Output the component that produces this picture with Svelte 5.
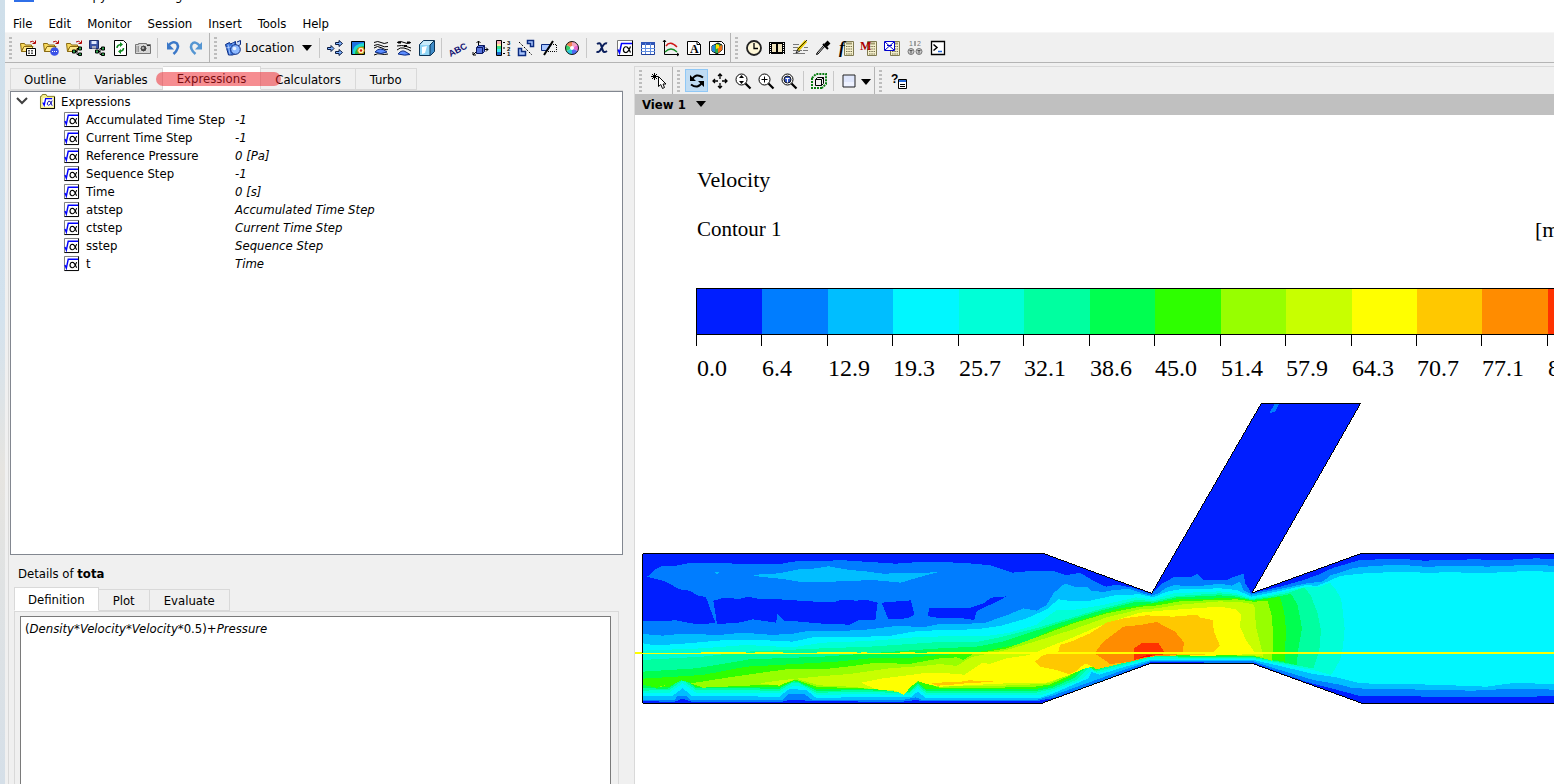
<script>
    // toolbar icons, drawn on a 16x16 grid
    const folder = `<path d="M.5 3.500h4l1 1.500h6v2H4L1.500 11.500z" fill="#f8d95c" stroke="#8a6a10"/><path d="M4 6.500h9l-2.500 5h-9z" fill="#ffe88a" stroke="#8a6a10"/><path d="M10 2q3-2 5 1M15.500.5v3h-3" fill="none" stroke="#b00000"/>`;
    const tree = `<path d="M8 11.500h3M11 8.500v6M11 8.500h2M11 14.500h2" stroke="#000" fill="none"/><path d="M6.500 10h3v3h-3zM12.500 7h3v3h-3zM12.500 13h3v2.500h-3z" fill="#2fa84f" stroke="#000"/>`;
    const root = `<path d="M1 9.500l1.500 3.500L4.500 3.500H15" fill="none" stroke="#00f" stroke-width="1.500"/><path d="M13.500 6.500Q11 13 8.500 12.500Q6 12 6.500 9Q7.500 6 10 7Q11.500 8 13.500 12.500" fill="none" stroke="#000" stroke-width="1.200"/>`;
    const sheet = `<path d="M6.500 1.500h9v14h-9z" fill="#f4efcb" stroke="#807a50"/><path d="M8 3.500h6" stroke="#a09a70" stroke-width="2"/><path d="M8 6.500h6M8 9h6M8 11.500h6M8 14h6" stroke="#76714f" stroke-dasharray="1.500 .8"/>`;
    const lens = `<circle cx="6.500" cy="6.500" r="5.500" fill="#fff" stroke="#000"/><path d="M10.500 10.500l5 5" stroke="#000" stroke-width="2.200"/>`;

    const icons = {
        openState: folder + `<path d="M6.500 8.500h9v7h-9z" fill="#fff" stroke="#000"/><path d="M8 10.500h6M8 12h6M8 13.500h5" stroke="#555" stroke-dasharray="2 1"/>`,
        openResults: folder + `<circle cx="11.500" cy="11.500" r="4.300" fill="#3a52e8"/><path d="M9 11.500h6" stroke="#fff" stroke-dasharray="1 1"/>`,
        openCase: folder + tree,
        saveState: `<path d="M.5.500h9v8h-9z" fill="#3b55a8" stroke="#1c2d6b"/><path d="M2.500 1h5v3h-5z" fill="#dfe8ff"/><path d="M3 6h4v2.500H3z" fill="#aab"/>` + tree,
        refresh: `<path d="M2.500.5h9l3 3v12h-12z" fill="#fff" stroke="#000"/><path d="M5 8q0-3 4-3.500M11.500 8q0 3-4 3.500" fill="none" stroke="#118a22" stroke-width="1.500"/><path d="M8 2l3 2.500L8 7zM9 9v5l-3-2.500z" fill="#118a22"/>`,
        camera: `<path d="M.5 4.500h3v-1h8v1h4v9H.5z" fill="#d5d5d5" stroke="#777"/><path d="M2 6v6M3.500 6v6" stroke="#999"/><circle cx="8.500" cy="8.500" r="3.500" fill="#444" stroke="#eee"/><circle cx="8" cy="8" r="1.300" fill="#aaa"/><path d="M12 5.500h3" stroke="#333"/>`,
        undo: `<path d="M3 6Q8 0 12 3.500Q15 8 8.500 14" fill="none" stroke="#3b78c8" stroke-width="2.500"/><path d="M2 2v7.500h7z" fill="#3b78c8"/>`,
        redo: `<path d="M12 6Q7 0 3.500 4.500Q1.500 9 7.500 14" fill="none" stroke="#5596d2" stroke-width="2.500"/><path d="M14 2v7.500H7z" fill="#5596d2"/>`,
        location: `<path d="M.5 4.500l4-2 1 1.500 5-2.500 1 12-4 1.500H3.500z" fill="#3c78e0" stroke="#0a2a80"/><path d="M3 4.500l2 10M8 2.500l1 12M1 8l9-2" stroke="#bcd4ff" stroke-width=".8"/><path d="M12 2l3.500-1.500v4L13 6" fill="#bcd4ff" stroke="#0a2a80"/><circle cx="10.500" cy="9.500" r="4.800" fill="#8db9ff" stroke="#0a2a80"/><circle cx="9.500" cy="8.500" r="1.800" fill="#e8f2ff"/>`,
        vector: `<g fill="#7fb2ff" stroke="#0a1a40"><path d="M.5 7.500h3.500v-2l3 3-3 3v-2H.5z"/><path d="M8.500 2.500H12v-2l3.500 3-3.500 3v-2H8.500z"/><path d="M8.500 11.500H12v-2l3.500 3-3.500 3v-2H8.500z"/></g>`,
        contour: `<path d="M1.500 1.500h13v13h-13z" fill="#1d72e0" stroke="#000"/><path d="M3 14V10q1-6 11-7v11z" fill="#20d8d0"/><path d="M5 14q0-7 9-8v8z" fill="#25b33c"/><circle cx="11" cy="10.500" r="3.300" fill="#fff7c0" stroke="#d08a00"/><circle cx="11" cy="10.500" r="1.200" fill="#d01010"/>`,
        streamline: `<path d="M1 2.500q4-2 7 0t7 0M1 5.500q4-2 7 0t7 1M1 8q3-3 8 0t6 1M1 15q4-2 7-1t7 0" fill="none" stroke="#000"/><path d="M2 12q5-6 12 0-6 3-12 0z" fill="#5b8cff" stroke="#0a2a80"/>`,
        particle: `<path d="M1 2.500q4-2 7 0t7 0M1 6q5-1 8 0t6 2M1 10q3-3 7-2t7 3" fill="none" stroke="#000"/><path d="M2 1.500h3v2H2zM11 1.500h3v2h-3zM8 5h3v2H8z"/><path d="M2 14q4-5 8-2l4 2.500q-5 1.500-12-.5z" fill="#5b8cff" stroke="#0a2a80"/>`,
        volume: `<path d="M.5 4.500l4-4h11v11l-4 4H.5z" fill="#3e8cc8" stroke="#0b3355"/><path d="M1 5h10v10H1z" fill="#8fd4f4"/><path d="M4.500 1h10.500l-4 4H1z" fill="#c9ecfa"/><path d="M3 7l5-1-2 7-3 1z" fill="#fff"/><path d="M11 5l4-4M11 5v10" stroke="#0b3355"/>`,
        label: `<text x="-2" y="13" transform="rotate(-28 8 8)" font-family="Liberation Sans" font-weight="bold" font-size="9" fill="#101070">ABC</text>`,
        frame: `<path d="M6.500 9V1M4.500 3l2-2 2 2M10 9.500h6M14 7.500l2 2-2 2M5 11l-4 4M1 12v3h3" fill="none" stroke="#000"/><path d="M4.500 7.500l2-2h6v6l-2 2h-6z" fill="#5673dc" stroke="#0b1860"/><path d="M4.500 7.500h6v6M10.500 7.500l2-2" fill="none" stroke="#0b1860"/>`,
        legend: `<path d="M1.500.5h5v15h-5z" fill="#f9b0b8" stroke="#000"/><path d="M2 4h4v3H2z" fill="#f8f09a"/><path d="M2 6h4v4H2z" fill="#3fe08b"/><path d="M2 9h4v3H2z" fill="#3ee8f4"/><path d="M2 12h4v3H2z" fill="#26c"/><path d="M8 2.500h2M8 8h2M8 13.500h2" stroke="#000"/><g font-family="Liberation Sans" font-size="6" font-weight="bold"><text x="12" y="5">3</text><text x="12" y="10.500">2</text><text x="12" y="16">1</text></g>`,
        instance: `<path d="M9.500.5h6v6h-3v-3h-3zM.5 8.500h3v3h4v4h-7z" fill="#a9c6ff" stroke="#0a2a80" stroke-width="1.500"/><path d="M1 2l13 13" stroke="#000" stroke-dasharray="2 1.500"/>`,
        clip: `<path d="M.5 4.500h10l-4 6h-6z" fill="#a9c6ff" stroke="#0a2a80"/><path d="M10 4.500h5.500v7H6" fill="none" stroke="#000" stroke-dasharray="1 1"/><path d="M12 1L3 15" stroke="#000" stroke-width="2"/>`,
        palette: `<circle cx="8" cy="8" r="6.500" fill="#fff"/><path d="M8 8V1.500a6.500 6.500 0 0 1 5.600 3.200z" fill="#f5a3c0"/><path d="M8 8l5.600-3.300a6.500 6.500 0 0 1 0 6.600z" fill="#e86bd0"/><path d="M8 8l5.600 3.300A6.500 6.500 0 0 1 8 14.500z" fill="#4d68f0"/><path d="M8 8v6.500a6.500 6.500 0 0 1-5.600-3.200z" fill="#28c8d8"/><path d="M8 8l-5.600 3.300a6.500 6.500 0 0 1 0-6.600z" fill="#35cf6a"/><path d="M8 8L2.400 4.700A6.500 6.500 0 0 1 8 1.500z" fill="#f08050"/><circle cx="8" cy="8" r="2" fill="#fff"/><circle cx="8" cy="8" r="6.500" fill="none" stroke="#111"/>`,
        variable: `<path d="M3 4q3-2 4 1l2 6q1 2 4 0M13 3.500q-2-1-4 2L6.500 10q-2 3-4 1.500" fill="none" stroke="#0b1f5c" stroke-width="2"/>`,
        expression: `<path d="M.5.500h15v15H.5z" fill="#fff" stroke="#777"/><path d="M15.500.5v15H.5" fill="none" stroke="#000"/>` + root,
        table: `<path d="M1.500 2.500h13v12h-13z" fill="#fff" stroke="#1d3f9a"/><path d="M1 2h14v3H1z" fill="#2f55b8"/><path d="M1 8.500h14M1 11.500h14M5.500 3v11M10.500 3v11" stroke="#5f8ce0"/>`,
        chart: `<path d="M1.500 0v14.500H16M0 2l1.500-2L3 2M14 13l2 1.500-2 1.500" fill="none" stroke="#000"/><path d="M3 6q4-6 11 1" fill="none" stroke="#d01818" stroke-width="1.500"/><path d="M2 12q6-6 12 0" fill="none" stroke="#118a22" stroke-width="1.200"/>`,
        comment: `<path d="M1.500 1.500h10l3 3v10h-13z" fill="#fff" stroke="#000"/><path d="M11 1.500v3h3.500" fill="none" stroke="#000"/><text x="4" y="12.500" font-family="Liberation Serif" font-weight="bold" font-size="12">A</text>`,
        figure: `<path d="M.5 1.500h12l3 3v10H.5z" fill="#fff" stroke="#000"/><path d="M3 6l6-3 4 2v5l-5 4-5-3z" fill="#2ba84a" stroke="#000"/><path d="M3 6l3-1.500v8L3 11z" fill="#28d"/><path d="M9 7l4-2v5l-4 3z" fill="#f07018"/><path d="M7 4l3 1v3L7 9z" fill="#ffe400"/>`,
        clock: `<circle cx="8" cy="8" r="7" fill="#fff8d8" stroke="#222" stroke-width="1.800"/><path d="M8 3v5.500h4" fill="none" stroke="#000" stroke-width="1.300"/>`,
        film: `<path d="M0 2h16v12H0z"/><path d="M3 4h4v8H3zM9 4h4v8H9z" fill="#efe3bd"/><path d="M1.500 3v11M14.500 3v11" stroke="#fff" stroke-dasharray="1 1"/>`,
        report: `<path d="M1 4.500h6M1 7.500h5M1 10.500h9M1 13.500h12M12 7.500h4M11 10.500h5" stroke="#777"/><path d="M14 1L6 10" stroke="#e8c800" stroke-width="3"/><path d="M15 0L6 9l-2 4 4-2" fill="none" stroke="#000" stroke-width=".8"/>`,
        probe: `<path d="M10 6l-7 8-1.500.500.5-1.500L9 5" fill="#eaeaea" stroke="#000"/><path d="M8 4l5 5" stroke="#000" stroke-width="2"/><path d="M10.500 5.500L14 2" stroke="#000" stroke-width="4"/>`,
        functionCalc: sheet + `<text x="1" y="12.500" font-family="Liberation Serif" font-size="17" font-style="italic" font-weight="bold">f</text>`,
        macroCalc: sheet + `<text x="-1" y="10" font-family="Liberation Serif" font-size="12" font-weight="bold" fill="#a00">M</text>`,
        meshCalc: sheet + `<path d="M.5 1.500h10v9H.5z" fill="#fff" stroke="#00c"/><path d="M1 2l9 8M10 2l-9 8M3 5.500h5" stroke="#00c"/>`,
        compare: `<g font-family="Liberation Sans" font-size="7" fill="#777"><text x="2" y="6">1</text><text x="10" y="6">2</text></g><circle cx="4" cy="11.500" r="3" fill="#ccc" stroke="#777"/><circle cx="12" cy="11.500" r="3" fill="#ccc" stroke="#777"/><path d="M2.500 10.500h3M4 10.500v3M10.500 10.500h3M12 10.500v3M8 1v5" stroke="#555"/>`,
        console: `<path d="M1.500 1.500h13v13h-13z" fill="#fff" stroke="#000" stroke-width="1.300"/><path d="M3.500 4.500L7 7.500l-3.500 3" fill="none" stroke="#000" stroke-width="1.500"/><path d="M8 11.500h4" stroke="#2468d8" stroke-width="1.500"/>`,
        pick: `<path d="M3.500 0v7M0 3.500h7M1 1l5 5M6 1L1 6" stroke="#000"/><path d="M7.500 3.500v10l2.300-2 1.700 4 2-1-1.500-3.500h3z" fill="#fff" stroke="#000"/>`,
        rotate: `<path d="M3 6.500Q7-.500 14 4.500M13 9.500Q9 16.500 2 11.500" fill="none" stroke="#000" stroke-width="2"/><path d="M1 2v6h6zM15 14V8H9z"/>`,
        pan: `<path d="M8 1v5M8 10v5M1 8h5M10 8h5M6 3l2-2 2 2M6 13l2 2 2-2M3 6L1 8l2 2M13 6l2 2-2 2" fill="none" stroke="#000" stroke-width="1.300"/>`,
        zoom: lens + `<path d="M6.500 2l2.500 3H4zM6.500 11L9 8H4z"/>`,
        zoomBox: lens + `<path d="M6.500 3.500v6M3.500 6.500h6" stroke="#000"/>`,
        fit: lens + `<circle cx="6.500" cy="6.500" r="3.500" fill="#3556c4" stroke="#111"/><path d="M4.500 5.500h4M6.500 5.500v4" stroke="#fff"/>`,
        highlight: `<path d="M1 5V15h10M1 5l4-4h10v10l-4 4" fill="none" stroke="#0a7d12" stroke-width="2" stroke-dasharray="2 1"/><path d="M4.500 6.500l2-2h6v6l-2 2h-6zM4.500 6.500h6v6M10.500 6.500l2-2" fill="none" stroke="#000"/>`,
        viewport: `<path d="M2 2h12v12H2z" fill="#dfe6fb" stroke="#222"/><path d="M3 9h10v4H3z" fill="#eef2ff"/>`,
        help: `<text x="0" y="10" font-family="Liberation Sans" font-weight="bold" font-size="12">?</text><path d="M7.500 6.500h8v9h-8z" fill="#fff" stroke="#000"/><path d="M8 8h7" stroke="#2468d8" stroke-width="2"/><path d="M9 11.500h5M9 13.500h5" stroke="#000"/>`,
        folderRoot: `<path d="M.5 2.500h1l1-2h4l1 2h8v13H.5z" fill="#f7ef8e" stroke="#7a7420"/><path d="M3 4.500h11v9H3z" fill="#fff"/><path d="M3 9l1.500 3L6 5h7" fill="none" stroke="#00f" stroke-width="1.400"/><path d="M13 7Q11 12.500 9 12T8 9.500q1-3 3-1.500l2 4.500" fill="none" stroke="#00a"/><path d="M15.500 3v12.500H1" fill="none" stroke="#000"/>`
    };

    const menus = ["File", "Edit", "Monitor", "Session", "Insert", "Tools", "Help"];
    const fileTools = ["openState", "openResults", "openCase", "saveState", "refresh", "camera"];
    const historyTools = ["undo", "redo"];
    const insertTools = [
        ["vector", "contour", "streamline", "particle", "volume"],
        ["label", "frame", "legend", "instance", "clip", "palette"],
        ["variable", "expression", "table", "chart", "comment", "figure"]
    ];
    const calcTools = ["clock", "film", "report", "probe", "functionCalc", "macroCalc", "meshCalc", "compare", "console"];
    const viewTools = ["rotate", "pan", "zoom", "zoomBox", "fit"];

    const tabs = ["Outline", "Variables", "Expressions", "Calculators", "Turbo"];
    const detailTabs = ["Definition", "Plot", "Evaluate"];
    let activeTab = "Expressions";
    let activeDetail = "Definition";
    let activeTool = "rotate";
    let expanded = true;

    const expressions = [
        ["Accumulated Time Step", "-1"],
        ["Current Time Step", "-1"],
        ["Reference Pressure", "0 [Pa]"],
        ["Sequence Step", "-1"],
        ["Time", "0 [s]"],
        ["atstep", "Accumulated Time Step"],
        ["ctstep", "Current Time Step"],
        ["sstep", "Sequence Step"],
        ["t", "Time"]
    ];

    const colors = ["#001eff", "#007dff", "#00beff", "#00f7ff", "#00ffd7", "#00ffa0", "#00ff50", "#2eff00", "#97ff00", "#c8ff00", "#ffff00", "#ffc800", "#ff8c00", "#ff3200", "#ff0000"];
    const levels = ["0.0", "6.4", "12.9", "19.3", "25.7", "32.1", "38.6", "45.0", "51.4", "57.9", "64.3", "70.7", "77.1", "83.6"];
    const bandX = i => Math.round(62 + i * 65.45);

    // duct outline and contour bands, three units to the pixel
    const duct = "20,41 1224,41 1547,160 1876,-410 2174,-410 1848,159 2174,41 2760,41 2760,490 2178,490 1848,370 1544,370 1217,490 20,490";
    const bands = [
        [1, "34,110 55,90 75,79 115,78 160,69 275,69 310,73 435,72 470,65 500,63 625,61 700,66 780,71 850,66 980,68 1062,76 1130,98 1195,92 1255,94 1290,106 1332,98 1375,124 1410,140 1440,134 1485,142 1515,152 1547,162 1552,155 1577,132 1612,112 1662,112 1685,102 1704,120 1772,120 1800,108 1822,101 1828,130 1847,160 1862,156 1932,140 2002,120 2050,103 2090,84 2172,60 2292,56 2362,62 2512,58 2602,60 2702,55 2760,58 2760,468 2612,472 2412,470 2172,468 2112,452 2012,426 1932,398 1852,368 1544,367 1472,394 1362,436 1252,474 1200,484 860,484 840,480 800,485 520,484 500,480 460,480 440,485 165,485 140,476 115,485 20,484 20,244 80,243 120,241 165,250 200,253 238,248 210,172 185,166 160,152 130,148 90,125"],
        [0, "232,182 265,173 310,177 335,170 365,176 430,178 520,184 590,187 620,179 660,182 690,179 725,188 718,240 670,240 640,254 560,251 480,244 445,243 423,222 421,248 385,243 350,238 300,250 243,251"],
        [0, "737,188 825,181 835,225 812,235 757,238"],
        [0, "880,205 997,205 1042,190 1067,173 1112,169 1082,185 1022,213 1015,240 982,235 912,235 875,228"],
        [2, "345,105 430,100 490,88 530,86 578,79 640,90 690,94 740,101 860,98 905,97 865,107 795,128 710,120 620,124 500,127 440,117 370,110"],
        [2, "235,96 261,99 240,101"],
        [1, "1917,-410 1930,-410 1917,-385 1900,-380"],
        [2, "20,282 80,287 140,281 250,285 320,278 400,284 460,283 520,272 620,273 700,268 790,257 860,262 912,252 1042,250 1112,226 1162,205 1202,212 1232,195 1252,160 1287,130 1322,142 1352,140 1367,152 1402,156 1432,150 1482,147 1512,158 1548,167 1572,158 1587,145 1612,136 1692,138 1752,131 1787,137 1812,124 1822,150 1847,164 1932,147 2012,130 2062,124 2082,107 2152,84 2212,78 2292,74 2362,80 2512,78 2552,80 2692,74 2760,78 2760,449 2632,446 2512,452 2312,448 2152,445 2112,434 2032,420 1932,390 1852,364 1544,364 1462,390 1357,428 1252,466 1200,480 860,480 840,472 800,480 530,480 505,463 455,463 440,480 165,480 150,468 125,468 115,480 20,480"],
        [3, "20,310 60,316 130,312 270,300 350,299 470,305 530,292 620,292 760,288 830,275 912,270 1022,268 1092,258 1172,235 1232,208 1267,178 1312,184 1352,184 1442,165 1512,163 1552,172 1592,155 1632,148 1752,145 1802,150 1847,170 1912,157 2012,135 2042,138 2072,126 2112,108 2172,101 2292,95 2362,98 2462,97 2532,100 2692,92 2760,98 2760,432 2632,429 2552,440 2392,434 2172,430 2102,412 2032,402 1932,378 1852,360 1544,360 1462,382 1390,404 1367,396 1357,415 1252,460 1212,474 870,474 845,455 825,472 700,472 540,473 510,450 460,447 430,470 168,468 140,445 110,467 20,467"],
        [4, "20,332 200,325 330,315 470,322 560,308 700,303 860,290 1052,288 1120,278 1200,255 1262,210 1312,210 1400,195 1500,172 1552,179 1612,160 1752,154 1802,160 1847,175 1900,165 2012,140 2052,140 2082,128 2100,150 2115,175 2120,210 2126,265 2121,320 2112,360 2092,395 2085,405 2040,392 1932,372 1852,357 1544,356 1462,377 1385,400 1367,390 1335,420 1252,453 1212,466 870,466 845,445 825,465 700,463 540,464 500,440 470,438 430,460 180,458 140,430 100,458 20,460"],
        [5, "20,360 200,350 330,335 560,325 700,320 912,306 1022,306 1100,290 1200,265 1300,235 1400,205 1500,180 1552,183 1622,168 1752,160 1802,165 1847,178 1950,160 2005,142 2025,168 2045,220 2055,270 2050,330 2032,385 1932,368 1852,354 1544,352 1462,373 1380,395 1360,380 1325,418 1252,447 1200,458 870,458 845,437 820,460 700,456 540,458 490,430 470,428 430,452 180,450 140,421 100,450 20,452"],
        [6, "20,395 180,385 260,372 340,358 560,350 700,340 912,325 1022,320 1100,305 1200,272 1300,240 1400,210 1500,185 1552,188 1622,172 1752,166 1802,170 1847,180 1910,172 1965,162 1985,195 1998,265 1988,320 1982,375 1932,365 1852,351 1544,349 1462,369 1375,391 1357,376 1315,414 1252,442 1200,453 870,452 845,431 820,457 700,451 540,452 485,425 470,424 430,446 180,444 140,415 95,447 20,444"],
        [7, "20,416 120,410 200,405 330,380 480,372 600,365 700,355 800,355 860,350 912,345 1000,340 1062,330 1160,310 1250,268 1350,235 1450,205 1540,192 1622,178 1802,174 1855,182 1932,170 1945,220 1950,270 1946,365 1852,349 1544,346 1462,366 1370,386 1350,376 1305,412 1252,436 1200,447 870,447 845,427 810,454 700,447 540,447 480,421 430,441 180,441 160,427 135,421 100,440 60,443 20,434"],
        [8, "165,430 280,412 400,395 450,388 560,388 650,378 720,368 820,372 912,355 962,352 982,360 1012,342 1112,325 1212,288 1312,250 1412,220 1512,200 1552,198 1632,184 1802,178 1852,185 1895,183 1908,230 1912,300 1908,362 1852,347 1544,344 1462,363 1365,382 1350,378 1295,410 1240,434 1180,442 912,444 850,423 805,450 640,444 540,440 480,419 440,432 200,443"],
        [8, "68,438 90,436 75,441"],
        [9, "370,430 440,420 540,410 640,402 760,385 860,378 912,372 962,378 990,360 1012,350 1112,330 1212,300 1312,268 1412,232 1512,208 1562,205 1622,195 1752,184 1830,188 1855,195 1860,260 1882,350 1852,346 1544,342 1462,360 1350,380 1290,406 1240,430 1140,436 912,440 850,419 800,458 740,450 640,440 550,436 480,416 430,437"],
        [10, "675,428 740,415 800,408 860,400 912,398 985,404 1010,388 1040,368 1060,372 1112,355 1180,345 1240,320 1312,292 1380,262 1440,240 1512,218 1562,213 1632,208 1752,200 1800,208 1815,225 1812,260 1830,300 1860,342 1700,348 1544,342 1440,367 1350,384 1300,405 1232,428 1112,430 912,440 870,432 845,423 825,440 803,465 780,452 720,448"],
        [11, "1197,365 1222,345 1267,335 1272,315 1312,302 1362,280 1412,248 1462,235 1532,226 1612,230 1682,224 1692,233 1730,240 1734,275 1752,318 1724,343 1632,346 1544,350 1382,388 1362,376 1347,370 1322,392 1302,403 1262,390 1212,380"],
        [11, "880,428 960,427 1000,421 1080,425 990,430 940,435 905,437"],
        [12, "1375,340 1402,305 1462,260 1512,255 1562,246 1617,275 1644,307 1640,340 1612,346 1544,350 1480,366 1422,372 1400,356"],
        [13, "1493,360 1494,325 1517,310 1567,308 1584,335 1586,343 1545,348"],
        [14, "1505,355 1530,346 1548,345 1545,349"]
    ];
    const lineSegments = [[0, 7], [66, 111], [120, 148], [182, 222], [226, 232], [265, 280], [292, 920]];
</script>

{#snippet icon(name)}
    <svg class="icon" viewBox="0 0 16 16" aria-hidden="true">{@html icons[name]}</svg>
{/snippet}

{#snippet tool(name)}
    <button class="tool" class:active={activeTool === name} aria-label={name} on:click={() => (activeTool = name)}>
        {@render icon(name)}
    </button>
{/snippet}

<div class="desktop">
    <div class="window">
        <div class="titlebar"><span class="app-icon"></span><span>CFD : Copy of Throttling</span></div>

        <nav class="menubar">
            {#each menus as menu}
                <button>{menu}</button>
            {/each}
        </nav>

        <div class="toolbar main-toolbar">
            <div class="group">
                <span class="grip"></span>
                {#each fileTools as name}{@render tool(name)}{/each}
                <span class="sep"></span>
                {#each historyTools as name}{@render tool(name)}{/each}
            </div>
            <div class="group">
                <span class="grip"></span>
                <button class="location">{@render icon("location")}<span>Location</span><i class="caret"></i></button>
                {#each insertTools as set}
                    <span class="sep"></span>
                    {#each set as name}{@render tool(name)}{/each}
                {/each}
            </div>
            <div class="group last">
                <span class="grip"></span>
                {#each calcTools as name}{@render tool(name)}{/each}
            </div>
        </div>

        <div class="work">
            <aside>
                <div class="tabs main-tabs" role="tablist">
                    {#each tabs as tab}
                        <button role="tab" aria-selected={tab === activeTab} class:selected={tab === activeTab} on:click={() => (activeTab = tab)}>
                            {tab}
                            {#if tab === "Expressions"}<span class="marker"></span>{/if}
                        </button>
                    {/each}
                </div>

                <div class="pane">
                    <div class="tree">
                        <div class="row root">
                            <button class="toggle" aria-label="Expand" on:click={() => (expanded = !expanded)}>
                                <svg viewBox="0 0 12 8"><path d="M1 1l5 5 5-5" fill="none" stroke="#404040" stroke-width="2" /></svg>
                            </button>
                            {@render icon("folderRoot")}
                            <span>Expressions</span>
                        </div>
                        {#if expanded}
                            {#each expressions as [name, value]}
                                <div class="row leaf">
                                    {@render icon("expression")}
                                    <span>{name}</span>
                                    <em>{value}</em>
                                </div>
                            {/each}
                        {/if}
                    </div>

                    <div class="details">
                        <h2>Details of <b>tota</b></h2>
                        <div class="tabs" role="tablist">
                            {#each detailTabs as tab}
                                <button role="tab" aria-selected={tab === activeDetail} class:selected={tab === activeDetail} on:click={() => (activeDetail = tab)}>{tab}</button>
                            {/each}
                        </div>
                        <div class="detail-page">
                            <div class="editor" role="textbox" tabindex="0" aria-label="Definition" contenteditable="true">(<em>Density</em>*<em>Velocity</em>*<em>Velocity</em>*0.5)+<em>Pressure</em></div>
                        </div>
                    </div>
                </div>
            </aside>

            <section class="viewer">
                <div class="toolbar">
                    <div class="group">
                        <span class="grip"></span>
                        {@render tool("pick")}
                    </div>
                    <div class="group">
                        <span class="grip"></span>
                        {#each viewTools as name}{@render tool(name)}{/each}
                        <span class="sep"></span>
                        {@render tool("highlight")}
                        <span class="sep"></span>
                        {@render tool("viewport")}
                        <button class="drop" aria-label="Viewport layout"><i class="caret"></i></button>
                    </div>
                    <div class="group last">
                        <span class="grip"></span>
                        {@render tool("help")}
                    </div>
                </div>
                <button class="view-title">View 1 <i class="caret"></i></button>
                <div class="canvas">
                    <svg class="plot" viewBox="0 0 919 669" preserveAspectRatio="xMinYMin slice">
                        <g class="plot-text">
                            <text x="62" y="72" font-size="22">Velocity</text>
                            <text x="62" y="121" font-size="21">Contour 1</text>
                            <text x="900" y="122" font-size="22">[m s^-1]</text>
                            {#each levels as level, i}
                                <text x={bandX(i)} y="261" font-size="24">{level}</text>
                            {/each}
                        </g>
                        <g shape-rendering="crispEdges">
                            {#each levels as _, i}
                                <rect x={bandX(i)} y="174" width="66" height="45" fill={colors[i]} />
                                <rect x={bandX(i) - 1} y="219" width="1" height="12" />
                            {/each}
                            <path d="M920 173.500H61.500V219.500H920" fill="none" stroke="#000" />
                        </g>
                        <clipPath id="duct"><polygon points={duct} /></clipPath>
                        <g transform="translate(1 425) scale(0.333333)" shape-rendering="crispEdges">
                            <g clip-path="url(#duct)">
                                <polygon points={duct} fill={colors[0]} />
                                {#each bands as [level, points]}
                                    <polygon {points} fill={colors[level]} />
                                {/each}
                            </g>
                            <polygon points={duct} fill="none" stroke="#000" stroke-width="3" />
                        </g>
                        <g fill="#ffff00">
                            <rect x="7" y="538" width="285" height="1" />
                            {#each lineSegments as [from, to]}
                                <rect x={from} y="537" width={to - from} height="2" />
                            {/each}
                        </g>
                    </svg>
                </div>
            </section>
        </div>
    </div>
</div>

<style>
    :global(body) {
        margin: 0;
        overflow: hidden;
    }

    .desktop {
        height: 100vh;
        box-sizing: border-box;
        padding-left: 5px;
        background: linear-gradient(#cfdfea, #d3e2ee 40%, #e6e4e0 60%, #d5dfe8);
        font-family: "DejaVu Sans Condensed", "DejaVu Sans", sans-serif;
        font-size: 13px;
        color: #000;
    }

    .window {
        height: 100%;
        display: flex;
        flex-direction: column;
        background: #f0f0f0;
    }

    button {
        font: inherit;
        color: inherit;
        border: 0;
        padding: 0;
        margin: 0;
        background: none;
        white-space: nowrap;
    }

    .titlebar {
        height: 12px;
        flex: none;
        display: flex;
        align-items: flex-end;
        gap: 8px;
        padding-left: 9px;
        background: #fff;
        line-height: 25px;
        overflow: hidden;
        box-sizing: border-box;
        padding-bottom: 4px;
    }

    .app-icon {
        width: 20px;
        height: 6px;
        background: #2f6fe8;
        margin-bottom: 6px;
    }

    .menubar {
        height: 18px;
        flex: none;
        display: flex;
        gap: 16px;
        padding: 2px 0 0 8px;
        background: #fff;
        border-bottom: 1px solid #f6f6f6;
    }

    .toolbar {
        display: flex;
        flex: none;
        box-sizing: border-box;
        background: #f0f0f0;
    }

    .main-toolbar {
        height: 30px;
        border-bottom: 1px solid #b4b4b4;
    }

    .group {
        display: flex;
        align-items: center;
        padding-right: 2px;
        border-right: 1px solid #b4b4b4;
    }

    .group.last {
        border: 0;
    }

    .grip {
        width: 3px;
        height: 22px;
        margin: 0 4px;
        background: repeating-linear-gradient(#bdbdbd 0 2px, transparent 2px 4px);
    }

    .sep {
        width: 1px;
        height: 20px;
        margin: 0 3px;
        background: #c8c8c8;
    }

    .tool {
        width: 23px;
        height: 23px;
        display: flex;
        align-items: center;
        justify-content: center;
    }

    .tool.active {
        background: #c0dcf3;
        outline: 1px solid #90c8f6;
        outline-offset: -1px;
    }

    .icon {
        width: 16px;
        height: 16px;
        flex: none;
        overflow: visible;
    }

    .location {
        display: flex;
        align-items: center;
        gap: 4px;
        width: 95px;
        padding-left: 4px;
        box-sizing: border-box;
    }

    .location .caret {
        margin-left: 4px;
    }

    .caret {
        display: inline-block;
        border: 5px solid transparent;
        border-top: 6px solid #000;
        border-bottom: 0;
    }

    .work {
        flex: 1;
        min-height: 0;
        display: flex;
        gap: 11px;
    }

    aside {
        flex: 0 0 618px;
        box-sizing: border-box;
        display: flex;
        flex-direction: column;
        padding: 3px 0 0 3px;
    }

    .tabs {
        display: flex;
        align-items: flex-end;
        height: 24px;
        flex: none;
    }

    .main-tabs {
        margin-left: 2px;
    }

    .tabs button {
        position: relative;
        height: 22px;
        padding: 0 14px;
        border: 1px solid #d9d9d9;
        border-left-width: 0;
        background: #f0f0f0;
    }

    .tabs button:first-child {
        padding: 0 13px;
        border-left-width: 1px;
    }

    .tabs button.selected {
        height: 24px;
        background: #fff;
        border-bottom-color: #fff;
    }

    .marker {
        position: absolute;
        left: -7px;
        right: -21px;
        top: 5px;
        height: 14px;
        border-radius: 7px;
        background: rgba(237, 28, 36, 0.5);
        z-index: 1;
        pointer-events: none;
    }

    .pane {
        flex: 1;
        min-height: 0;
        display: flex;
        flex-direction: column;
        padding-left: 1px;
        border-left: 1px solid #d9d9d9;
        border-top: 1px solid #d9d9d9;
    }

    .tree {
        height: 462px;
        flex: none;
        background: #fff;
        border: 1px solid #828790;
    }

    .row {
        height: 18px;
        display: flex;
        align-items: center;
        gap: 6px;
    }

    .row .icon {
        width: 15px;
        height: 15px;
    }

    .row.root {
        padding-left: 5px;
    }

    .row.leaf {
        gap: 7px;
        padding-left: 53px;
    }

    .leaf span {
        width: 142px;
    }

    .toggle {
        width: 12px;
        margin-right: 6px;
        display: flex;
    }

    .details {
        flex: 1;
        min-height: 0;
        display: flex;
        flex-direction: column;
        padding: 10px 4px 0;
    }

    h2 {
        margin: 0 0 4px;
        padding-left: 4px;
        font-size: 13px;
        font-weight: normal;
        line-height: 18px;
    }

    .detail-page {
        flex: 1;
        padding: 4px 7px 0 5px;
        border: 1px solid #d9d9d9;
        border-bottom: 0;
        display: flex;
    }

    .editor {
        flex: 1;
        border: 1px solid #7a7a7a;
        border-bottom: 0;
        background: #fff;
        padding: 3px 4px;
        line-height: 18px;
    }

    .viewer {
        flex: 1;
        min-width: 0;
        display: flex;
        flex-direction: column;
        margin-top: 3px;
        border-left: 1px solid #d9d9d9;
        border-top: 1px solid #d9d9d9;
    }

    .viewer .toolbar {
        height: 27px;
    }

    .viewer .grip {
        margin-right: 5px;
    }

    .drop {
        width: 12px;
    }

    .view-title {
        height: 21px;
        flex: none;
        background: #c0c0c0;
        text-align: left;
        font-weight: bold;
        padding-left: 7px;
    }

    .view-title .caret {
        margin: 0 0 2px 6px;
    }

    .canvas {
        flex: 1;
        min-height: 0;
        background: #fff;
        overflow: hidden;
    }

    .plot {
        display: block;
        width: 100%;
        height: 100%;
    }

    .plot-text {
        font-family: "Liberation Serif", serif;
    }
</style>
